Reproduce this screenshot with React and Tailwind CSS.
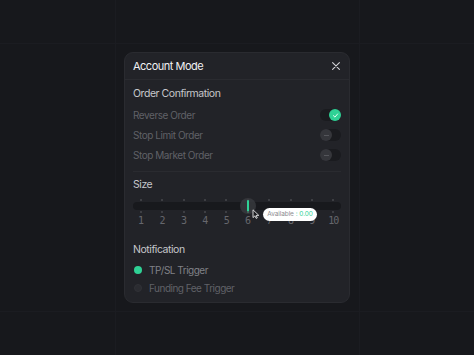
import React from 'react';

/**
 * Account Mode dialog
 * Dark settings card with toggles, size slider and notification radios
 */

const font = { fontFamily: 'Inter, "Noto Sans", sans-serif' };
const mono = { fontFamily: '"DejaVu Sans Mono", "Liberation Mono", monospace' };

function Toggle({ on }) {
    return (
        <div className="relative w-[21px] h-[12px] rounded-full bg-[#1a1b1f] flex items-center">
            {on ? (
                <div className="absolute right-0 size-[12px] rounded-full bg-[#2fd195] flex items-center justify-center">
                    <svg width="7" height="7" viewBox="0 0 10 10" fill="none">
                        <path d="M2 5.2 4.2 7.3 8 2.8" stroke="#e8fff5" strokeWidth="1.4" strokeLinecap="round" strokeLinejoin="round" />
                    </svg>
                </div>
            ) : (
                <div className="absolute left-0 size-[12px] rounded-full bg-[#35363b] flex items-center justify-center">
                    <div className="w-[5px] h-px bg-[#55565b]" />
                </div>
            )}
        </div>
    );
}

function Row({ label, on }) {
    return (
        <div className="h-[20px] flex items-center justify-between">
            <span className="text-[10px] tracking-[-0.45px] text-[#606167]">{label}</span>
            <Toggle on={on} />
        </div>
    );
}

function Radio({ label, on }) {
    return (
        <div className="h-[18px] flex items-center gap-[6px]">
            <div className="w-[10px] flex justify-center">
                <div className={`size-[8px] rounded-full ${on ? 'bg-[#2fd195]' : 'bg-[#2b2c31] border border-[#303136]'}`} />
            </div>
            <span className={`text-[10px] tracking-[-0.5px] ${on ? 'text-[#808187]' : 'text-[#606167]'}`}>{label}</span>
        </div>
    );
}

function Slider() {
    const steps = [1, 2, 3, 4, 5, 6, 7, 8, 9, 10];
    return (
        <div className="relative mt-[7px]">
            {/* track */}
            <div className="absolute left-0 right-0 top-[3px] h-[8px] rounded-full bg-[#18191d]" />

            {/* ticks + labels */}
            <div className="relative -mx-[3px] flex">
                {steps.map((n) => (
                    <div key={n} className="flex-1 flex flex-col items-center">
                        <div className="size-[2px] rounded-full bg-[#47484d]" />
                        <div className="h-[10px] flex items-center justify-center">
                            {n === 6 && (
                                <div className="size-[16px] rounded-full bg-[#3a3b40]/80 flex items-center justify-center">
                                    <div className="w-[2px] h-[13px] rounded-full bg-[#2fd195]" />
                                </div>
                            )}
                        </div>
                        <div className="size-[2px] rounded-full bg-[#47484d]" />
                        <span className="mt-[1px] text-[10px] tracking-[-0.8px] leading-[14px] text-[#66676d]" style={mono}>
                            {n}
                        </span>
                    </div>
                ))}
            </div>

            {/* cursor */}
            <svg className="absolute left-[119px] top-[10px]" width="8" height="10" viewBox="0 0 8 10" fill="none">
                <path d="M1 0.8 1 8.6 2.9 6.9 4.2 9.4 5.3 8.9 4.1 6.4 6.8 6.4Z" fill="#1c1d21" stroke="#e6e6e8" strokeWidth="0.9" strokeLinejoin="round" />
            </svg>

            {/* tooltip */}
            <div className="absolute left-[130px] top-[9px] w-[54px] h-[13px] rounded-full bg-white flex items-center justify-center text-[6.5px] leading-none whitespace-nowrap tracking-[-0.1px]">
                <span className="text-[#8b8c90]">Available</span>
                <span className="text-[#2fd195] ml-[2px]">: 0.00</span>
            </div>
        </div>
    );
}

export default function App() {
    return (
        <div className="relative w-[474px] h-[355px] bg-[#17181c] flex items-center justify-center overflow-hidden" style={font}>
            {/* faint frame lines */}
            <div className="absolute left-0 right-0 top-[43px] h-px bg-[#1b1c21]" />
            <div className="absolute left-0 right-0 top-[311px] h-px bg-[#1b1c21]" />
            <div className="absolute top-0 bottom-0 left-[115px] w-px bg-[#1b1c21]" />
            <div className="absolute top-0 bottom-0 left-[359px] w-px bg-[#1b1c21]" />

            <div className="relative w-[226px] h-[251px] rounded-[9px] bg-[#222328] border border-[#2a2b30] flex flex-col">
                {/* Header */}
                <div className="h-[27px] px-[8px] flex items-center justify-between border-b border-[#2a2b30]">
                    <span className="text-[11px] tracking-[-0.5px] text-[#f0f0f2]">Account Mode</span>
                    <svg width="8" height="8" viewBox="0 0 8 8" fill="none" className="mr-[1px]">
                        <path d="M0.6 0.6 7.4 7.4M7.4 0.6 0.6 7.4" stroke="#d4d4d8" strokeWidth="1.1" strokeLinecap="round" />
                    </svg>
                </div>

                <div className="px-[8px] flex flex-col">
                    {/* Order confirmation */}
                    <div className="pt-[7px] text-[10.5px] tracking-[-0.45px] leading-[14px] text-[#c6c7cb]">Order Confirmation</div>
                    <div className="mt-[4px] flex flex-col">
                        <Row label="Reverse Order" on />
                        <Row label="Stop Limit Order" />
                        <Row label="Stop Market Order" />
                    </div>

                    <div className="mt-[6px] h-px bg-[#2a2b30]" />

                    {/* Size */}
                    <div className="mt-[6px] text-[10.5px] tracking-[-0.45px] leading-[14px] text-[#c6c7cb]">Size</div>
                    <Slider />

                    {/* Notification */}
                    <div className="mt-[15px] text-[10.5px] tracking-[-0.45px] leading-[14px] text-[#c6c7cb]">Notification</div>
                    <div className="mt-[4px] flex flex-col">
                        <Radio label="TP/SL Trigger" on />
                        <Radio label="Funding Fee Trigger" />
                    </div>
                </div>
            </div>
        </div>
    );
}
